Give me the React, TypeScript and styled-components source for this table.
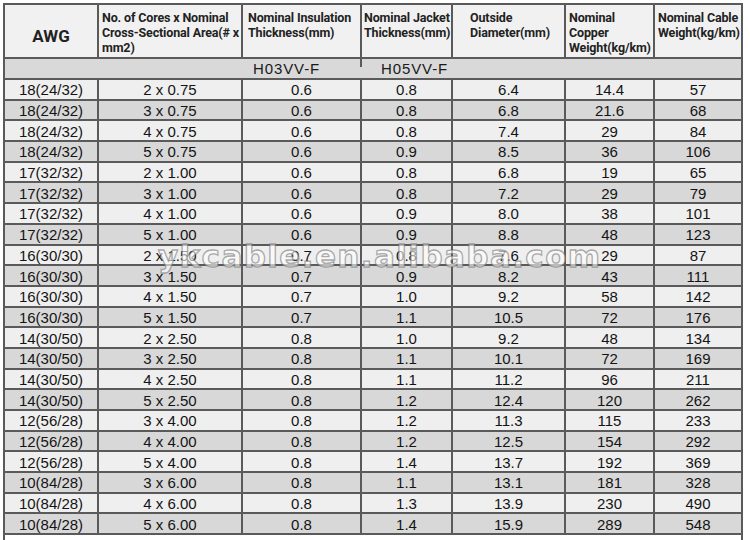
import React from "react";
import styled, { createGlobalStyle } from "styled-components";

const Global = createGlobalStyle`
  html, body { margin: 0; padding: 0; background: #ffffff; }
  body { width: 750px; height: 540px; overflow: hidden; }
`;

const COLS = "92px 142px 117px 89px 111px 87px 86px";

const Page = styled.div`
  position: relative;
  padding: 3px 0 0 3px;
  width: 750px;
  height: 540px;
  box-sizing: border-box;
`;

const Table = styled.div`
  display: grid;
  grid-template-columns: ${COLS};
  grid-template-rows: 52px 19px repeat(22, 18.7px) 30px;
  gap: 2px;
  padding: 2px;
  width: max-content;
  background: #5a5a5a;
`;

const HeadCell = styled.div<{ $pl?: number }>`
  background: #f1f1f1;
  font-family: Roboto, "Liberation Sans", sans-serif;
  font-weight: 700;
  font-size: 12.5px;
  line-height: 15px;
  color: #222;
  padding: 5px 0 0 ${(p) => p.$pl ?? 3}px;
  letter-spacing: -0.15px;
  white-space: nowrap;
`;

const AwgCell = styled.div`
  background: #f1f1f1;
  display: flex;
  align-items: center;
  justify-content: center;
  padding-top: 10px;
  box-sizing: border-box;
  font-family: Roboto, "Liberation Sans", sans-serif;
  font-weight: 700;
  font-size: 17px;
  color: #222;
`;

const TypeRow = styled.div`
  grid-column: 1 / -1;
  background: #d9d9d9;
  display: grid;
  grid-template-columns: ${COLS};
  column-gap: 2px;
  align-items: center;
  position: relative;
`;

const TypeLabel = styled.div<{ $col: number; $pl: number }>`
  grid-column: ${(p) => p.$col};
  padding-left: ${(p) => p.$pl}px;
  font-family: "Liberation Sans", Arial, sans-serif;
  font-size: 15px;
  letter-spacing: 0.9px;
  color: #1a1a1a;
  line-height: 19px;
`;

const Tick = styled.span`
  position: absolute;
  left: 355px;
  top: 0;
  width: 1.5px;
  height: 8px;
  background: #5a5a5a;
`;

const Cell = styled.div<{ $dark: boolean }>`
  background: ${(p) => (p.$dark ? "#d8d8d8" : "#efefef")};
  display: flex;
  align-items: center;
  justify-content: center;
  font-family: "Liberation Sans", Arial, sans-serif;
  font-size: 15px;
  color: #141414;
  line-height: 1;
  padding-top: 1px;
  box-sizing: border-box;
`;

const Tail = styled.div`
  grid-column: 1 / -1;
  background: #ffffff;
`;

const Watermark = styled.div`
  position: absolute;
  left: 158px;
  top: 238px;
  font-family: "DejaVu Sans", "Liberation Sans", sans-serif;
  font-weight: 700;
  font-size: 31px;
  letter-spacing: 1.4px;
  color: rgba(255, 255, 255, 0.6);
  -webkit-text-stroke: 1.3px rgba(105, 105, 105, 0.55);
  white-space: nowrap;
  pointer-events: none;
`;

const rows: string[][] = [
  ["18(24/32)", "2 x 0.75", "0.6", "0.8", "6.4", "14.4", "57"],
  ["18(24/32)", "3 x 0.75", "0.6", "0.8", "6.8", "21.6", "68"],
  ["18(24/32)", "4 x 0.75", "0.6", "0.8", "7.4", "29", "84"],
  ["18(24/32)", "5 x 0.75", "0.6", "0.9", "8.5", "36", "106"],
  ["17(32/32)", "2 x 1.00", "0.6", "0.8", "6.8", "19", "65"],
  ["17(32/32)", "3 x 1.00", "0.6", "0.8", "7.2", "29", "79"],
  ["17(32/32)", "4 x 1.00", "0.6", "0.9", "8.0", "38", "101"],
  ["17(32/32)", "5 x 1.00", "0.6", "0.9", "8.8", "48", "123"],
  ["16(30/30)", "2 x 1.50", "0.7", "0.8", "7.6", "29", "87"],
  ["16(30/30)", "3 x 1.50", "0.7", "0.9", "8.2", "43", "111"],
  ["16(30/30)", "4 x 1.50", "0.7", "1.0", "9.2", "58", "142"],
  ["16(30/30)", "5 x 1.50", "0.7", "1.1", "10.5", "72", "176"],
  ["14(30/50)", "2 x 2.50", "0.8", "1.0", "9.2", "48", "134"],
  ["14(30/50)", "3 x 2.50", "0.8", "1.1", "10.1", "72", "169"],
  ["14(30/50)", "4 x 2.50", "0.8", "1.1", "11.2", "96", "211"],
  ["14(30/50)", "5 x 2.50", "0.8", "1.2", "12.4", "120", "262"],
  ["12(56/28)", "3 x 4.00", "0.8", "1.2", "11.3", "115", "233"],
  ["12(56/28)", "4 x 4.00", "0.8", "1.2", "12.5", "154", "292"],
  ["12(56/28)", "5 x 4.00", "0.8", "1.4", "13.7", "192", "369"],
  ["10(84/28)", "3 x 6.00", "0.8", "1.1", "13.1", "181", "328"],
  ["10(84/28)", "4 x 6.00", "0.8", "1.3", "13.9", "230", "490"],
  ["10(84/28)", "5 x 6.00", "0.8", "1.4", "15.9", "289", "548"],
];

const headers: { lines: string[]; pl: number }[] = [
  { lines: ["No. of Cores x Nominal", "Cross-Sectional Area(# x", "mm2)"], pl: 3 },
  { lines: ["Nominal Insulation", "Thickness(mm)"], pl: 5 },
  { lines: ["Nominal Jacket", "Thickness(mm)"], pl: 2 },
  { lines: ["Outside", "Diameter(mm)"], pl: 17 },
  { lines: ["Nominal", "Copper", "Weight(kg/km)"], pl: 3 },
  { lines: ["Nominal Cable", "Weight(kg/km)"], pl: 3 },
];

export default function App() {
  return (
    <>
      <Global />
      <Page>
        <Table>
          <AwgCell>AWG</AwgCell>
          {headers.map((h, i) => (
            <HeadCell key={i} $pl={h.pl}>
              {h.lines.map((l, j) => (
                <div key={j}>{l}</div>
              ))}
            </HeadCell>
          ))}
          <TypeRow>
            <TypeLabel $col={3} $pl={10}>H03VV-F</TypeLabel>
            <TypeLabel $col={4} $pl={19}>H05VV-F</TypeLabel>
            <Tick />
          </TypeRow>
          {rows.map((r, i) =>
            r.map((v, j) => (
              <Cell key={`${i}-${j}`} $dark={i % 2 === 1}>
                {v}
              </Cell>
            ))
          )}
          <Tail />
        </Table>
        <Watermark>ykcable.en.alibaba.com</Watermark>
      </Page>
    </>
  );
}
